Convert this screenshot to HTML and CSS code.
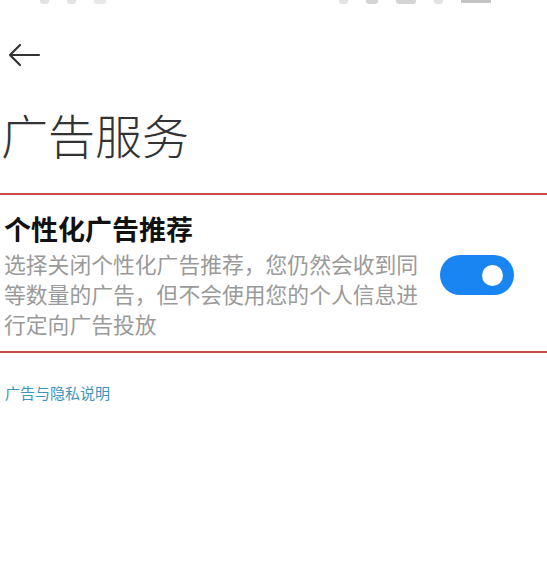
FILE: index.html
```html
<!DOCTYPE html>
<html lang="zh">
<head>
    <meta charset="UTF-8">
    <meta name="viewport" content="width=device-width, initial-scale=1.0">
    <title>广告服务</title>
    <link rel="stylesheet" href="styles.css">
</head>
<body>
    <div class="status-bar">
        <div class="status-left">
            <span class="dot"></span><span class="dot"></span><span class="dot small"></span>
        </div>
        <div class="status-right">
            <span class="dot"></span><span class="dot ring"></span><span class="dot bars"></span><span class="dot"></span><span class="battery"></span>
        </div>
    </div>

    <div class="header">
        <svg class="back" width="34" height="24" viewBox="0 0 34 24">
            <path d="M32 12H3M13 2L3 12l10 10" fill="none" stroke="#333" stroke-width="2.2" stroke-linecap="round" stroke-linejoin="round"/>
        </svg>
    </div>

    <h1 class="page-title">广告服务</h1>

    <div class="setting">
        <div class="setting-text">
            <div class="setting-name">个性化广告推荐</div>
            <div class="setting-desc">选择关闭个性化广告推荐，您仍然会收到同等数量的广告，但不会使用您的个人信息进行定向广告投放</div>
        </div>
        <div class="switch on"><span class="knob"></span></div>
    </div>

    <a class="privacy-link" href="#">广告与隐私说明</a>
</body>
</html>
```

FILE: styles.css
```css
body {
    margin: 0;
    background-color: #fff;
    font-family: "Noto Sans CJK SC", "Noto Sans", sans-serif;
    color: #333;
    width: 547px;
    height: 567px;
    overflow: hidden;
}
.status-bar {
    height: 6px;
    display: flex;
    justify-content: space-between;
    padding: 0 56px 0 40px;
}
.status-left, .status-right {
    display: flex;
    gap: 18px;
    align-items: flex-start;
}
.dot {
    width: 9px;
    height: 4px;
    background-color: #e2e2e2;
    border-radius: 0 0 3px 3px;
}
.dot.small { width: 12px; background-color: #e8e8e8; }
.dot.ring { width: 12px; background-color: #d4d4d4; }
.dot.bars { width: 20px; background-color: #d4d4d4; }
.battery {
    width: 30px;
    height: 3px;
    background-color: #c4c4c4;
}
.header {
    height: 98px;
    display: flex;
    align-items: center;
    padding-left: 7px;
}
.back {
    display: block;
}
.page-title {
    margin: 0 0 0 1px;
    font-size: 47px;
    font-weight: 300;
    line-height: 60px;
    color: #333;
}
.setting {
    margin-top: 29px;
    border-top: 2px solid #c94848;
    border-bottom: 2px solid #c94848;
    display: flex;
    align-items: center;
    padding: 16px 0 12px 4px;
}
.setting-text {
    width: 420px;
}
.setting-name {
    font-size: 27px;
    font-weight: 700;
    color: #111;
    line-height: 36px;
}
.setting-desc {
    font-size: 21.8px;
    line-height: 30px;
    color: #9a9a9a;
    margin-top: 2px;
}
.switch {
    margin-left: 16px;
    width: 74px;
    height: 40px;
    border-radius: 20px;
    background-color: #d0d0d0;
    display: flex;
    align-items: center;
    justify-content: flex-start;
    padding: 0 11px;
    box-sizing: border-box;
}
.switch.on {
    background-color: #1985f2;
    justify-content: flex-end;
}
.knob {
    width: 21px;
    height: 21px;
    border-radius: 50%;
    background-color: #fff;
}
.privacy-link {
    display: block;
    margin: 29px 0 0 5px;
    font-size: 15px;
    color: #3d94bd;
    text-decoration: none;
}
```
